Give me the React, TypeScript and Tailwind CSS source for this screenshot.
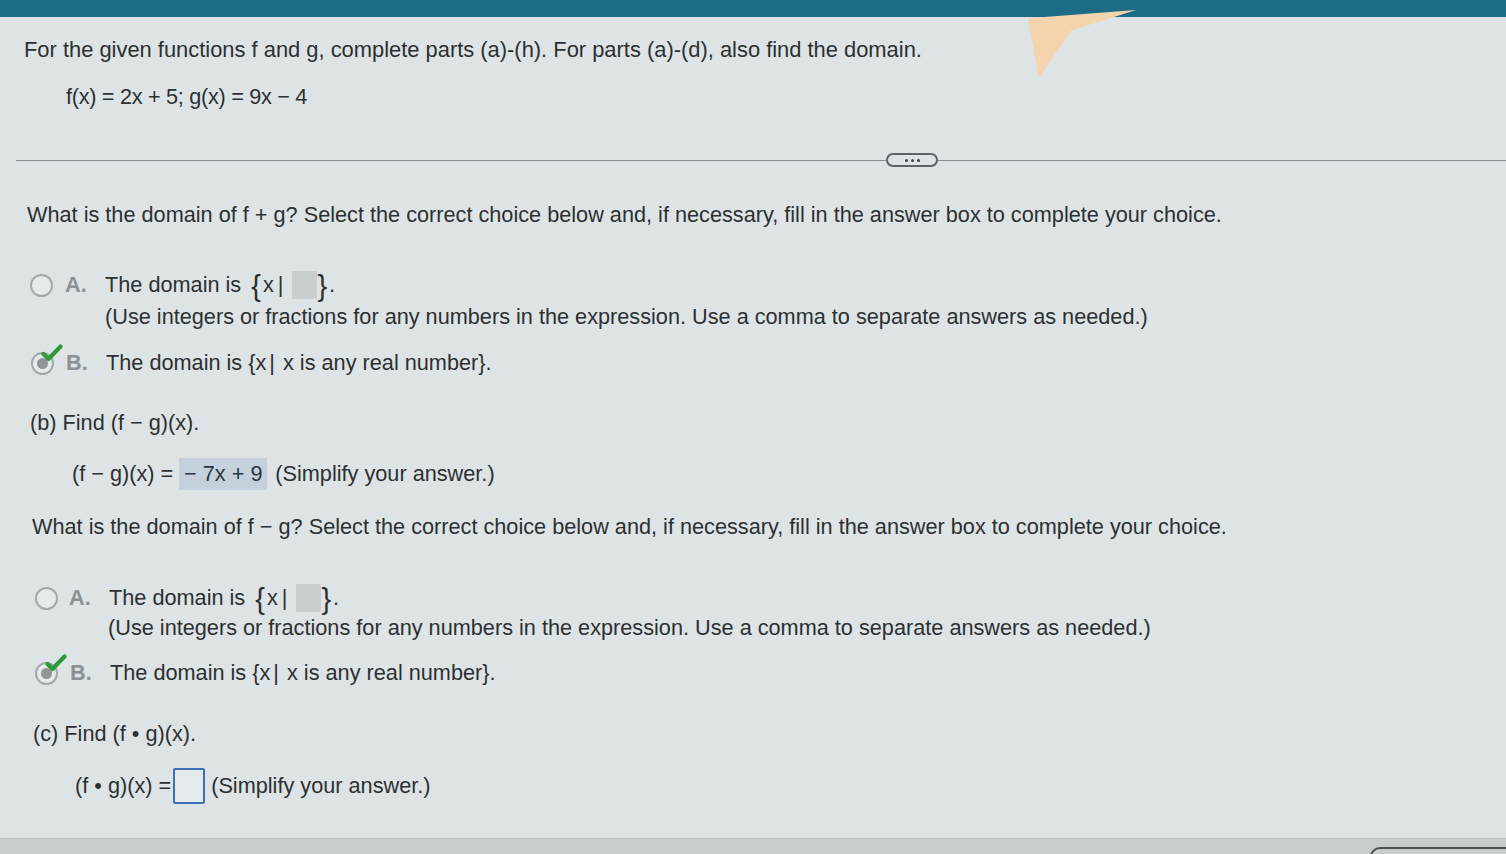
// ── COMPONENT ─────────────────────────────────────────────────────────────────
function Radio({ checked }: { checked?: boolean }) {
  return (
    <span className="relative inline-flex w-[23px] h-[23px] shrink-0 items-center justify-center rounded-full border-2 border-[#a3a9ab] bg-[#e6ebec]">
      {checked && <span className="w-[11px] h-[11px] rounded-full bg-[#8f9598]" />}
      {checked && (
        <svg className="absolute -top-[10px] left-[8px]" width="22" height="19" viewBox="0 0 22 19" fill="none">
          <path d="M2.5 10l5 5L19.5 2.5" stroke="#2f9a3c" strokeWidth="4.2" strokeLinecap="round" strokeLinejoin="round" />
        </svg>
      )}
    </span>
  );
}

function Brace({ children }: { children: string }) {
  return <span className="text-[29px] leading-none relative top-[1px] font-light">{children}</span>;
}

function ChoiceA({ pl, labelMl }: { pl: string; labelMl: string }) {
  return (
    <div className={`${pl} flex items-center h-[24px]`}>
      <Radio />
      <span className={`${labelMl} w-[40px] text-[#8b9195] font-bold`}>A.</span>
      <span>The domain is</span>
      <span className="ml-[10px]"><Brace>{"{"}</Brace></span>
      <span className="ml-[2px]">x</span>
      <span className="ml-[4px]">|</span>
      <span className="ml-[9px] w-[25px] h-[28px] bg-[#c9cecf]" />
      <Brace>{"}"}</Brace>
      <span className="ml-[2px]">.</span>
    </div>
  );
}

function ChoiceB({ pl }: { pl: string }) {
  return (
    <div className={`${pl} flex items-center h-[24px]`}>
      <Radio checked />
      <span className="ml-[12px] w-[40px] text-[#8b9195] font-bold">B.</span>
      <span>The domain is {"{"}x</span>
      <span className="ml-[3px]">|</span>
      <span className="ml-[8px]">x is any real number{"}"}.</span>
    </div>
  );
}

export default function App() {
  return (
    <div
      className="w-[1506px] h-[854px] overflow-hidden bg-[#dee4e5] text-[#2c3032] text-[21.7px] leading-[24px] relative"
      style={{ fontFamily: '"Liberation Sans", Arial, sans-serif' }}
    >
      {/* Top bar */}
      <div className="h-[17px] bg-[#1c6c86]" />

      {/* glare */}
      <div
        className="absolute left-[1028px] top-[10px] w-[108px] h-[68px] bg-[#f3d4ac]"
        style={{ clipPath: "polygon(0% 12%, 100% 0%, 40% 30%, 10% 100%)" }}
      />

      <div className="flex flex-col">
        <div className="mt-[21px] pl-[24px] text-[21.9px]">
          For the given functions f and g, complete parts (a)-(h). For parts (a)-(d), also find the domain.
        </div>
        <div className="mt-[23px] pl-[66px] tracking-[-0.3px]">f(x) = 2x + 5; g(x) = 9x − 4</div>

        {/* divider */}
        <div className="mt-[44px] flex items-center h-[14px] pl-[16px]">
          <div className="w-[870px] h-px bg-[#878d90]" />
          <div className="w-[52px] h-[14px] rounded-full border-2 border-[#5d6366] flex items-center justify-center gap-[3px]">
            <span className="w-[3px] h-[3px] rounded-full bg-[#3b4043]" />
            <span className="w-[3px] h-[3px] rounded-full bg-[#3b4043]" />
            <span className="w-[3px] h-[3px] rounded-full bg-[#3b4043]" />
          </div>
          <div className="flex-1 h-px bg-[#878d90]" />
        </div>

        <div className="mt-[36px] pl-[27px]">
          What is the domain of f + g? Select the correct choice below and, if necessary, fill in the answer box to complete your choice.
        </div>

        {/* (a) choices */}
        <div className="mt-[46px]">
          <ChoiceA pl="pl-[30px]" labelMl="ml-[12px]" />
        </div>
        <div className="mt-[8px] pl-[105px]">
          (Use integers or fractions for any numbers in the expression. Use a comma to separate answers as needed.)
        </div>
        <div className="mt-[22px]">
          <ChoiceB pl="pl-[31px]" />
        </div>

        {/* (b) */}
        <div className="mt-[36px] pl-[30px]">(b) Find (f − g)(x).</div>
        <div className="mt-[23px] pl-[72px] flex items-center h-[32px]">
          <span>(f − g)(x) =&nbsp;</span>
          <span className="h-[32px] w-[88px] bg-[#c4d1dc] flex items-center justify-center text-[#2b3440]">− 7x + 9</span>
          <span className="ml-[8px]">(Simplify your answer.)</span>
        </div>

        <div className="mt-[25px] pl-[32px]">
          What is the domain of f − g? Select the correct choice below and, if necessary, fill in the answer box to complete your choice.
        </div>

        <div className="mt-[47px]">
          <ChoiceA pl="pl-[35px]" labelMl="ml-[11px]" />
        </div>
        <div className="mt-[6px] pl-[108px]">
          (Use integers or fractions for any numbers in the expression. Use a comma to separate answers as needed.)
        </div>
        <div className="mt-[21px]">
          <ChoiceB pl="pl-[35px]" />
        </div>

        {/* (c) */}
        <div className="mt-[37px] pl-[33px]">(c) Find (f • g)(x).</div>
        <div className="mt-[22px] pl-[75px] flex items-center h-[36px]">
          <span>(f • g)(x) =</span>
          <span className="ml-[2px] w-[32px] h-[36px] border-2 border-[#3f6fb3] rounded-[2px] bg-[#e4eaeb]" />
          <span className="ml-[6px]">(Simplify your answer.)</span>
        </div>
      </div>

      {/* bottom band */}
      <div className="absolute left-0 right-0 bottom-0 h-[16px] bg-[#c7cdce] border-t border-[#b9bfc0]">
        <div className="absolute right-[-10px] top-[8px] w-[146px] h-[30px] rounded-[10px] border-2 border-[#4a4f52]" />
      </div>
    </div>
  );
}
